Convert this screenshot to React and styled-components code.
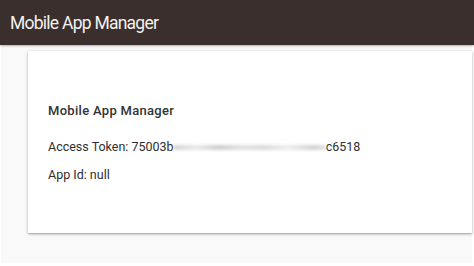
import React from 'react'
import styled, { createGlobalStyle } from 'styled-components'

const Global = createGlobalStyle`
  html, body {
    margin: 0;
    padding: 0;
    background: #ffffff;
    font-family: Roboto, "Liberation Sans", sans-serif;
  }
`

const AppBar = styled.header`
    height: 45px;
    background-color: #3a2f2d;
    display: flex;
    align-items: center;
    padding-left: 10px;
    box-shadow: 0 1px 2px rgba(0, 0, 0, 0.3);
    position: relative;
    z-index: 2;
`

const Title = styled.h1`
    margin: 0;
    font-size: 17.5px;
    font-weight: 400;
    color: #f4f1f0;
    letter-spacing: -0.75px;
`

const Main = styled.main`
    margin: 0 2px 0 1px;
    height: 218px;
    background-color: #f9f9f9;
    padding: 6px 0 0 27px;
    box-sizing: border-box;
`

const Card = styled.section`
    height: 182px;
    background-color: #ffffff;
    box-shadow: 0 1px 3px rgba(0, 0, 0, 0.28), 0 1px 1px rgba(0, 0, 0, 0.12);
    padding: 50px 0 0 20px;
    box-sizing: border-box;
    color: #222;
`

const Heading = styled.h2`
    margin: 0 0 16px;
    font-size: 13px;
    line-height: 20px;
    font-weight: 500;
    letter-spacing: 0.3px;
    color: #333;
`

const Line = styled.p`
    margin: 0 0 8px;
    font-size: 12.5px;
    line-height: 20px;
    color: #2e2e2e;
`

const Smudge = styled.span`
    display: inline-block;
    width: 152px;
    height: 5px;
    vertical-align: middle;
    background: linear-gradient(90deg, #cfcfcf 0%, #e6e6e6 15%, #c8c8c8 30%, #dedede 45%, #d6d6d6 60%, #ececec 75%, #cccccc 92%, #e0e0e0 100%);
    filter: blur(1.6px);
    opacity: 0.9;
`

const App = () => {
  return (
    <>
      <Global />
      <AppBar>
        <Title>Mobile App Manager</Title>
      </AppBar>
      <Main>
        <Card>
          <Heading>Mobile App Manager</Heading>
          <Line>Access Token: 75003b<Smudge />c6518</Line>
          <Line>App Id: null</Line>
        </Card>
      </Main>
    </>
  )
}

export default App
